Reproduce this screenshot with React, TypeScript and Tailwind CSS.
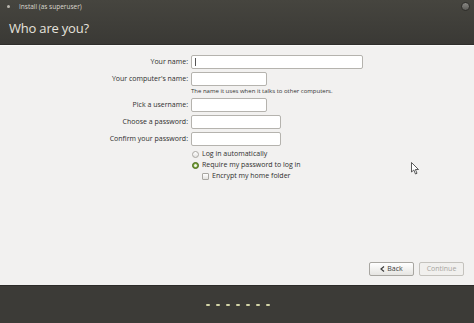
import { ReactNode } from 'react';

function Row({ label, width, cursor, children }: { label: string; width: string; cursor?: boolean; children?: ReactNode }) {
  return (
    <>
      <div className="flex items-center justify-end h-[14px] pr-[3px] text-[7px] text-[#2e2e2e]">{label}</div>
      <div className="flex flex-col">
        <div className={`h-[14px] ${width} rounded-[2px] border border-[#b5b3ae] bg-white flex items-center pl-[3px]`}>
          {cursor && <div className="w-px h-[8px] bg-[#555]" />}
        </div>
        {children}
      </div>
    </>
  );
}

export default function App() {
  return (
    <div
      className="w-[474px] h-[323px] flex flex-col bg-[#f2f1f0] overflow-hidden relative"
      style={{ fontFamily: '"Open Sans", "Liberation Sans", sans-serif' }}
    >
      <div className="h-[45px] bg-gradient-to-b from-[#46453f] to-[#3a3935] flex flex-col border-b border-[#2f2e2b]">
        <div className="h-[13px] flex items-center pl-[7px] pr-[4px]">
          <div className="w-[3px] h-[3px] rounded-full bg-[#bbb8b0]" />
          <span className="ml-[9px] text-[6.5px] text-[#dcd8cf]">Install (as superuser)</span>
          <div className="ml-auto w-[9px] h-[9px] rounded-full bg-gradient-to-b from-[#8a8984] to-[#5c5b57] border border-[#2e2d2a]" />
        </div>
        <div className="flex-1 flex items-center pl-[9px] pt-[1px] text-[13px] tracking-[-0.2px] text-[#e6e3dd]">Who are you?</div>
      </div>
      <div className="h-px bg-[#fafaf9]" />

      <div className="flex-1 flex flex-col">
        <div className="grid grid-cols-[191px_1fr] gap-y-[3px] pt-[9px]">
          <Row label="Your name:" width="w-[172px]" cursor />
          <Row label="Your computer's name:" width="w-[76px]">
            <div className="text-[6px] text-[#333] mt-[1px] h-[8px] leading-[8px]">
              The name it uses when it talks to other computers.
            </div>
          </Row>
          <Row label="Pick a username:" width="w-[76px]" />
          <Row label="Choose a password:" width="w-[90px]" />
          <Row label="Confirm your password:" width="w-[90px]" />
        </div>

        <div className="flex flex-col pl-[192px] pt-[4px] gap-[3px] text-[7px] text-[#2e2e2e]">
          <div className="flex items-center h-[8px] gap-[3px]">
            <div className="w-[7px] h-[7px] rounded-full border border-[#a9a7a2] bg-gradient-to-b from-white to-[#e4e3e0]" />
            <span>Log in automatically</span>
          </div>
          <div className="flex items-center h-[8px] gap-[3px]">
            <div className="w-[7px] h-[7px] rounded-full border border-[#4c6b1d] bg-[#77a33a] flex items-center justify-center">
              <div className="w-[3px] h-[3px] rounded-full bg-[#f4f7ec]" />
            </div>
            <span>Require my password to log in</span>
          </div>
          <div className="flex items-center h-[8px] gap-[3px] pl-[10px]">
            <div className="w-[7px] h-[7px] rounded-[1px] border border-[#a9a7a2] bg-gradient-to-b from-white to-[#e4e3e0]" />
            <span>Encrypt my home folder</span>
          </div>
        </div>

        <div className="mt-auto flex justify-end gap-[5px] pr-[10px] pb-[9px] text-[7px]">
          <div className="w-[45px] h-[14px] rounded-[2px] border border-[#a8a6a1] bg-gradient-to-b from-white to-[#e6e5e2] flex items-center justify-center text-[#3c3c3c]">
            <svg width="5" height="6" viewBox="0 0 5 6" className="mr-[2px]">
              <path d="M4 0.5 L1 3 L4 5.5" fill="none" stroke="#3c3c3c" strokeWidth="1.2" />
            </svg>
            Back
          </div>
          <div className="w-[45px] h-[14px] rounded-[2px] border border-[#c4c2bd] bg-[#f1f0ee] flex items-center justify-center text-[#a7a5a0]">
            Continue
          </div>
        </div>
      </div>

      <div className="h-[38px] bg-[#3c3b37] border-t border-[#2c2b28] flex items-center justify-center pl-[2px]">
        <div className="flex gap-[6px]">
          {[0, 1, 2, 3, 4, 5, 6].map((i) => (
            <div key={i} className="w-[4px] h-[2px] rounded-[1px] bg-[#d3d4a6]" />
          ))}
        </div>
      </div>

      <svg width="9" height="13" viewBox="0 0 9 13" className="absolute left-[411px] top-[162px]">
        <path d="M0.5 0.5 L0.5 10 L2.8 8 L4.5 12 L6 11.3 L4.4 7.5 L7.5 7.5 Z" fill="#fff" stroke="#333" strokeWidth="0.8" />
      </svg>
    </div>
  );
}
